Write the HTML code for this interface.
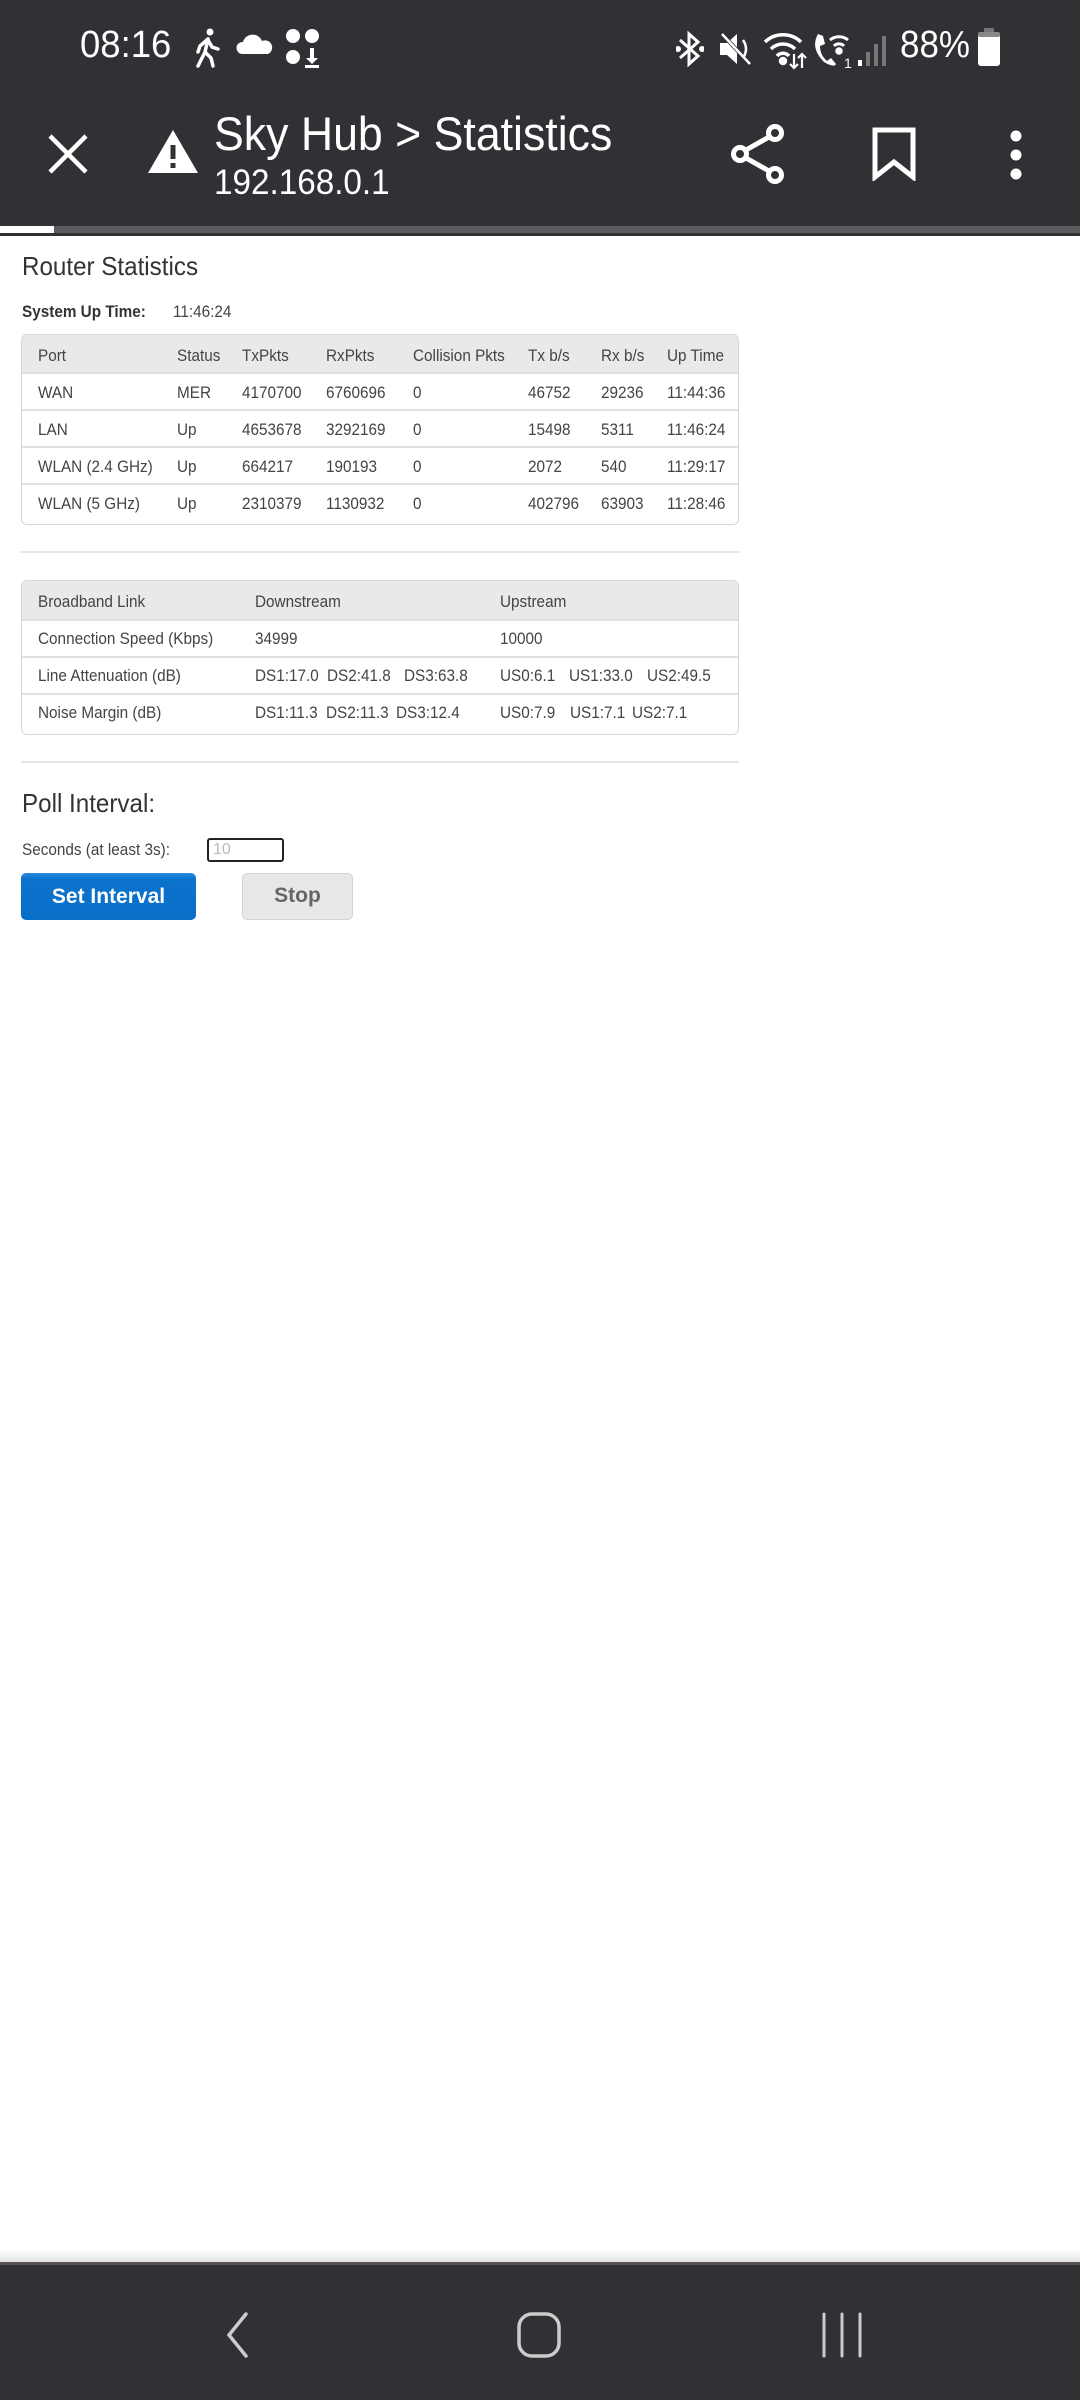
<!DOCTYPE html>
<html><head><meta charset="utf-8"><style>
*{margin:0;padding:0;box-sizing:border-box}
body{width:1080px;height:2400px;background:#fff;position:relative;overflow:hidden;font-family:"Liberation Sans",sans-serif;color:#3a3a3a}
.a{position:absolute;white-space:nowrap}
#top{position:absolute;left:0;top:0;width:1080px;height:236px;background:#303134}
.w{color:#fff}
.c{font-size:17px;transform:scaleX(.9);transform-origin:0 50%;line-height:20px;color:#444}
.box{position:absolute;border:1.5px solid #d8d8d8;border-radius:6px;overflow:hidden;background:#fff}
.hd{position:absolute;left:0;right:0;top:0;background:#e9e9e9}
.ln{position:absolute;left:0;right:0;height:1.5px;background:#e0e0e0}
#nav{position:absolute;left:0;top:2265px;width:1080px;height:135px;background:#303134}
</style></head><body>
<div id="top">
 <div class="a w" style="left:80px;top:24px;font-size:38px;transform:scaleX(.96);transform-origin:0 0">08:16</div>
 <svg class="a" style="left:192px;top:28px" width="32" height="40" viewBox="0 0 32 40" fill="none" stroke="#fff" stroke-width="3.5" stroke-linecap="round"><circle cx="18" cy="4" r="3.5" fill="#fff" stroke="none"/><path d="M16 11 L13 24 L6 38 M13 24 L19 30 L21 38 M16 11 L8 18 L6 24 M16 12 L20 19 L26 21"/></svg>
 <svg class="a" style="left:236px;top:33px" width="38" height="22" viewBox="0 0 38 22"><path d="M6 21 A6 6 0 0 1 7 9 A10 10 0 0 1 26 8 A7 7 0 0 1 32 21 Z" fill="#fff"/></svg>
 <svg class="a" style="left:284px;top:28px" width="38" height="40" viewBox="0 0 38 40" fill="#fff"><circle cx="9" cy="8" r="7"/><circle cx="28" cy="8" r="7"/><circle cx="9" cy="29" r="7"/><path d="M26 20h4v10h4l-6 6-6-6h4z"/><rect x="21" y="37" width="14" height="3"/></svg>
 <svg class="a" style="left:676px;top:30px" width="28" height="38" viewBox="0 0 28 38" fill="none" stroke="#fff" stroke-width="3"><path d="M4 10 L22 26 L13 34 V4 L22 12 L4 28"/><circle cx="2" cy="19" r="1.5" fill="#fff"/><circle cx="26" cy="19" r="1.5" fill="#fff"/></svg>
 <svg class="a" style="left:718px;top:30px" width="36" height="38" viewBox="0 0 36 38" fill="#fff"><path d="M2 13h7l10-9v30l-10-9H2z"/><path d="M4 4 L32 34" stroke="#303134" stroke-width="4"/><path d="M4 4 L32 34" stroke="#fff" stroke-width="2.5"/><path d="M25 10 q6 9 0 18" stroke="#fff" stroke-width="2.5" fill="none"/></svg>
 <svg class="a" style="left:762px;top:30px" width="46" height="40" viewBox="0 0 46 40" fill="none" stroke="#fff" stroke-width="3.5"><path d="M3 12 A26 26 0 0 1 39 12 M9 19 A17 17 0 0 1 33 19 M15 26 A8 8 0 0 1 27 26"/><circle cx="21" cy="31" r="2.5" fill="#fff"/><path d="M32 24v14M28 34l4 4 4-4M40 38V24M36 28l4-4 4 4" stroke-width="2.2"/></svg>
 <svg class="a" style="left:812px;top:30px" width="42" height="40" viewBox="0 0 42 40" fill="none" stroke="#fff" stroke-width="3.5"><path d="M6 4 q-8 14 6 28 q10 6 12 2 l-5 -6 -4 3 q-7-6-7-15 l5-2 -2-8z" fill="#fff" stroke="none"/><path d="M18 10 A14 14 0 0 1 36 10 M22 16 A7 7 0 0 1 32 16" stroke-width="3"/><circle cx="27" cy="21" r="2" fill="#fff"/><text x="32" y="38" fill="#fff" stroke="none" font-size="14" font-family="Liberation Sans">1</text></svg>
 <svg class="a" style="left:858px;top:34px" width="30" height="32" viewBox="0 0 30 32" fill="#777"><rect x="0" y="26" width="4" height="6" fill="#fff"/><rect x="8" y="18" width="4" height="14"/><rect x="16" y="10" width="4" height="22"/><rect x="24" y="2" width="4" height="30"/></svg>
 <div class="a w" style="left:900px;top:24px;font-size:38px;transform:scaleX(.92);transform-origin:0 0">88%</div>
 <svg class="a" style="left:978px;top:28px" width="22" height="38" viewBox="0 0 22 38"><rect x="6" y="0" width="10" height="5" rx="1" fill="#777"/><rect x="0" y="4" width="22" height="34" rx="3" fill="#fff"/><rect x="0" y="4" width="22" height="5" rx="2" fill="#888"/></svg>
 <svg class="a" style="left:46px;top:132px" width="44" height="44" viewBox="0 0 44 44" stroke="#fff" stroke-width="4.5"><path d="M4 4L40 40M40 4L4 40"/></svg>
 <svg class="a" style="left:147px;top:128px" width="52" height="46" viewBox="0 0 52 46"><path d="M26 2 L51 45 H1 Z" fill="#fff"/><rect x="23.5" y="17" width="5" height="14" fill="#303134"/><rect x="23.5" y="35" width="5" height="5" fill="#303134"/></svg>
 <div class="a w" style="left:214px;top:106px;font-size:47px;line-height:56px;transform:scaleX(.95);transform-origin:0 0">Sky Hub &gt; Statistics</div>
 <div class="a w" style="left:214px;top:162px;font-size:35px;line-height:42px;transform:scaleX(.95);transform-origin:0 0">192.168.0.1</div>
 <svg class="a" style="left:730px;top:124px" width="56" height="60" viewBox="0 0 56 60" fill="none" stroke="#fff" stroke-width="5"><circle cx="45" cy="9" r="6.5"/><circle cx="10" cy="30" r="6.5"/><circle cx="45" cy="51" r="6.5"/><path d="M39 13L16 26M16 34L39 47"/></svg>
 <svg class="a" style="left:872px;top:127px" width="44" height="54" viewBox="0 0 44 54" fill="none" stroke="#fff" stroke-width="5"><path d="M3 3H41V50L22 35L3 50Z"/></svg>
 <svg class="a" style="left:1007px;top:130px" width="18" height="50" viewBox="0 0 18 50" fill="#fff"><circle cx="9" cy="6" r="5.5"/><circle cx="9" cy="25" r="5.5"/><circle cx="9" cy="44" r="5.5"/></svg>
 <div class="a" style="left:0;top:226px;width:1080px;height:7px;background:#5a5b5e"></div>
 <div class="a" style="left:0;top:226px;width:54px;height:7px;background:#fff"></div>
</div>

<div class="a" style="left:22px;top:251px;font-size:26px;color:#333;transform:scaleX(.93);transform-origin:0 0">Router Statistics</div>
<div class="a c" style="left:22px;top:302px;font-weight:bold;color:#333">System Up Time:</div>
<div class="a c" style="left:173px;top:302px">11:46:24</div>

<div class="box" style="left:21px;top:334px;width:718px;height:191px">
 <div class="hd" style="height:37px"></div>
 <div class="ln" style="top:37px"></div><div class="ln" style="top:74px"></div><div class="ln" style="top:111px"></div><div class="ln" style="top:148px"></div>
</div>
<div class="a" style="left:21px;top:346px;width:718px">
 <div class="a c" style="left:17px;top:0">Port</div><div class="a c" style="left:156px;top:0">Status</div><div class="a c" style="left:221px;top:0">TxPkts</div><div class="a c" style="left:305px;top:0">RxPkts</div><div class="a c" style="left:392px;top:0">Collision Pkts</div><div class="a c" style="left:507px;top:0">Tx b/s</div><div class="a c" style="left:580px;top:0">Rx b/s</div><div class="a c" style="left:646px;top:0">Up Time</div>
 <div class="a c" style="left:17px;top:37px">WAN</div><div class="a c" style="left:156px;top:37px">MER</div><div class="a c" style="left:221px;top:37px">4170700</div><div class="a c" style="left:305px;top:37px">6760696</div><div class="a c" style="left:392px;top:37px">0</div><div class="a c" style="left:507px;top:37px">46752</div><div class="a c" style="left:580px;top:37px">29236</div><div class="a c" style="left:646px;top:37px">11:44:36</div>
 <div class="a c" style="left:17px;top:74px">LAN</div><div class="a c" style="left:156px;top:74px">Up</div><div class="a c" style="left:221px;top:74px">4653678</div><div class="a c" style="left:305px;top:74px">3292169</div><div class="a c" style="left:392px;top:74px">0</div><div class="a c" style="left:507px;top:74px">15498</div><div class="a c" style="left:580px;top:74px">5311</div><div class="a c" style="left:646px;top:74px">11:46:24</div>
 <div class="a c" style="left:17px;top:111px">WLAN (2.4 GHz)</div><div class="a c" style="left:156px;top:111px">Up</div><div class="a c" style="left:221px;top:111px">664217</div><div class="a c" style="left:305px;top:111px">190193</div><div class="a c" style="left:392px;top:111px">0</div><div class="a c" style="left:507px;top:111px">2072</div><div class="a c" style="left:580px;top:111px">540</div><div class="a c" style="left:646px;top:111px">11:29:17</div>
 <div class="a c" style="left:17px;top:148px">WLAN (5 GHz)</div><div class="a c" style="left:156px;top:148px">Up</div><div class="a c" style="left:221px;top:148px">2310379</div><div class="a c" style="left:305px;top:148px">1130932</div><div class="a c" style="left:392px;top:148px">0</div><div class="a c" style="left:507px;top:148px">402796</div><div class="a c" style="left:580px;top:148px">63903</div><div class="a c" style="left:646px;top:148px">11:28:46</div>
</div>

<div class="a" style="left:21px;top:551px;width:718px;height:2px;background:#e4e4e4"></div>

<div class="box" style="left:21px;top:580px;width:718px;height:155px">
 <div class="hd" style="height:38px"></div>
 <div class="ln" style="top:38px"></div><div class="ln" style="top:75px"></div><div class="ln" style="top:112px"></div>
</div>
<div class="a" style="left:21px;top:592px;width:718px">
 <div class="a c" style="left:17px;top:0">Broadband Link</div><div class="a c" style="left:234px;top:0">Downstream</div><div class="a c" style="left:479px;top:0">Upstream</div>
 <div class="a c" style="left:17px;top:37px">Connection Speed (Kbps)</div><div class="a c" style="left:234px;top:37px">34999</div><div class="a c" style="left:479px;top:37px">10000</div>
 <div class="a c" style="left:17px;top:74px">Line Attenuation (dB)</div><div class="a c" style="left:234px;top:74px">DS1:17.0</div><div class="a c" style="left:306px;top:74px">DS2:41.8</div><div class="a c" style="left:383px;top:74px">DS3:63.8</div><div class="a c" style="left:479px;top:74px">US0:6.1</div><div class="a c" style="left:548px;top:74px">US1:33.0</div><div class="a c" style="left:626px;top:74px">US2:49.5</div>
 <div class="a c" style="left:17px;top:111px">Noise Margin (dB)</div><div class="a c" style="left:234px;top:111px">DS1:11.3</div><div class="a c" style="left:305px;top:111px">DS2:11.3</div><div class="a c" style="left:375px;top:111px">DS3:12.4</div><div class="a c" style="left:479px;top:111px">US0:7.9</div><div class="a c" style="left:549px;top:111px">US1:7.1</div><div class="a c" style="left:611px;top:111px">US2:7.1</div>
</div>

<div class="a" style="left:21px;top:761px;width:718px;height:2px;background:#e4e4e4"></div>

<div class="a" style="left:22px;top:788px;font-size:26px;color:#333;transform:scaleX(.93);transform-origin:0 0">Poll Interval:</div>
<div class="a c" style="left:22px;top:840px">Seconds (at least 3s):</div>
<div class="a" style="left:207px;top:838px;width:77px;height:24px;border:2px solid #222;border-radius:3px;font-size:16px;color:#bbb;padding-left:4px;line-height:20px">10</div>
<div class="a" style="left:21px;top:873px;width:175px;height:47px;border-radius:5px;background:linear-gradient(#2b8ae0 0,#0a73cc 12%,#0a6fc8 100%);color:#fff;font-size:21px;font-weight:bold;text-align:center;line-height:47px">Set Interval</div>
<div class="a" style="left:242px;top:873px;width:111px;height:47px;border-radius:5px;background:#e8e8e8;border:1.5px solid #d4d4d4;color:#666;font-size:21px;font-weight:bold;text-align:center;line-height:44px">Stop</div>

<div class="a" style="left:0;top:2250px;width:1080px;height:15px;background:linear-gradient(#fff,#ddd)"></div>
<div class="a" style="left:0;top:2262px;width:1080px;height:3px;background:#5a5250"></div>
<div id="nav">
 <svg class="a" style="left:222px;top:46px" width="30" height="48" viewBox="0 0 30 48" fill="none" stroke="#ccc" stroke-width="3.5" stroke-linecap="round"><path d="M24 3L7 24L24 45"/></svg>
 <svg class="a" style="left:516px;top:46px" width="46" height="48" viewBox="0 0 46 48" fill="none" stroke="#ccc" stroke-width="3.5"><rect x="3" y="3" width="40" height="42" rx="13"/></svg>
 <svg class="a" style="left:820px;top:46px" width="44" height="48" viewBox="0 0 44 48" stroke="#ccc" stroke-width="3" stroke-linecap="round"><path d="M4 3V45M22 3V45M40 3V45"/></svg>
</div>
</body></html>
